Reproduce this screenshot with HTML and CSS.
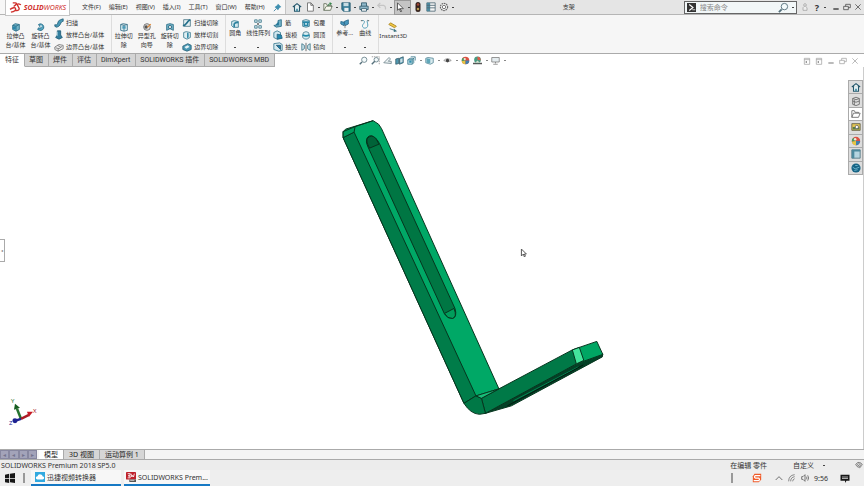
FILE: index.html
```html
<!DOCTYPE html>
<html lang="zh-CN">
<head>
<meta charset="utf-8">
<meta name="viewport" content="width=device-width, initial-scale=1">
<title>支架</title>
<link rel="stylesheet" href="styles.css">
</head>
<body>
<svg class="defs" aria-hidden="true">
  <symbol id="boss" viewBox="0 0 12 12"><path d="M2 4l3-2 5 1v6l-4 2-4-2z" fill="#73b5c9" stroke="#286b85"/><path d="M2 4l4 1v6M6 5l4-2" fill="none" stroke="#286b85"/><circle cx="4" cy="7" r="2" fill="#2c86aa"/></symbol>
  <symbol id="revolve" viewBox="0 0 12 12"><path d="M3 3a4 4 0 1 1 1 7l-2-1 1-2c3 1 4-1 3-2L5 6z" fill="#55a5c0" stroke="#236985"/><circle cx="6" cy="5" r="1" fill="#e7f5f8"/></symbol>
  <symbol id="sweep" viewBox="0 0 12 12"><path d="M1 8c5 2 2-5 7-6l3-1v3C7 4 9 10 3 11L1 10z" fill="#4a9ab8" stroke="#215f78"/></symbol>
  <symbol id="loft" viewBox="0 0 12 12"><path d="M4 1h4v5l2 3-4 2-4-2 2-3z" fill="#347f9f" stroke="#205a73"/><path d="M4 2v5" stroke="#a9d7e4"/></symbol>
  <symbol id="boundary" viewBox="0 0 12 12"><path d="M1 6l5-3 5 1v4L5 11 1 9z" fill="#eee" stroke="#777"/><path d="M2 7l4 1 4-3M5 8v3M4 4l4 2" fill="none" stroke="#777"/></symbol>
  <symbol id="cut" viewBox="0 0 12 12"><path d="M2 3l3-1 5 1v7l-4 1-4-1z" fill="#d9edf2" stroke="#397087"/><path d="M2 3l4 1 4-1M6 4v7" fill="none" stroke="#397087"/><path d="M4 5h4v3H4z" fill="#4a9ab8"/></symbol>
  <symbol id="hole" viewBox="0 0 12 12"><circle cx="6" cy="6" r="4" fill="#ddd" stroke="#666"/><circle cx="5" cy="6" r="2" fill="#555"/><path d="M6 6l4-4 1 1-4 4z" fill="#e4872f"/></symbol>
  <symbol id="revcut" viewBox="0 0 12 12"><path d="M2 3l4-1 4 1v7l-4-2-4 2z" fill="#77b5c9" stroke="#286b85"/><circle cx="6" cy="6" r="2" fill="#ddd" stroke="#286b85"/></symbol>
  <symbol id="sweepcut" viewBox="0 0 12 12"><path d="M2 2h8v8H2z" fill="#e5f0f3" stroke="#4c7888"/><path d="M1 9c5 0 4-5 9-7" fill="none" stroke="#246f8b" stroke-width="2"/></symbol>
  <symbol id="loftcut" viewBox="0 0 12 12"><path d="M2 3l3-1 5 1v6l-4 2-4-2z" fill="#dfeef2" stroke="#39788e"/><path d="M6 3l2 1v5l-2 1z" fill="#368da9"/></symbol>
  <symbol id="boundcut" viewBox="0 0 12 12"><path d="M1 5l6-3 4 2v5l-5 2-5-2z" fill="#4998b4" stroke="#27627a"/><path d="M3 6l4-2 2 2-4 2z" fill="#e6f3f7"/></symbol>
  <symbol id="fillet" viewBox="0 0 12 12"><path d="M2 3l3-1 5 1v7H4l-2-2z" fill="#d5eaf0" stroke="#397b91"/><path d="M5 10V6q1-2 5-2" fill="none" stroke="#2f829e" stroke-width="2"/></symbol>
  <symbol id="pattern" viewBox="0 0 12 12"><path d="M2 1h3v3H2zM7 1h3v3H7zM2 8h3v3H2zM7 8h3v3H7z" fill="#d3e9ef" stroke="#467c8e"/><path d="M5 5l2 2M7 5L5 7" stroke="#555"/></symbol>
  <symbol id="rib" viewBox="0 0 12 12"><path d="M1 9l5-1V3l4-1v8l-6 1z" fill="#74b3c7" stroke="#286b85"/><path d="M3 8l4-4v5z" fill="#247798"/></symbol>
  <symbol id="draft" viewBox="0 0 12 12"><path d="M1 3l4-2 4 2v7l-4 1-4-2z" fill="#d3e8ef" stroke="#397b91"/><path d="M5 5l5 1 1 4-6 1z" fill="#258ab0" stroke="#246481"/></symbol>
  <symbol id="shell" viewBox="0 0 12 12"><path d="M1 2l7-1 3 2v7l-4 1-6-2z" fill="#d5e9ef" stroke="#397b91"/><path d="M4 4h5v5z" fill="#237fa7" stroke="#245c78"/></symbol>
  <symbol id="wrap" viewBox="0 0 12 12"><path d="M2 3q4-2 8 0v7q-4 2-8 0z" fill="#d9edf2" stroke="#39768c"/><path d="M2 5h8M4 5v4h4V5" fill="none" stroke="#2685a6" stroke-width="2"/></symbol>
  <symbol id="dome" viewBox="0 0 12 12"><path d="M2 6a4 4 0 0 1 8 0v3q-4 4-8 0z" fill="#d9edf2" stroke="#4e7e90"/><path d="M2 6q4 2 8 0" fill="none" stroke="#238bab" stroke-width="2"/></symbol>
  <symbol id="mirror" viewBox="0 0 12 12"><path d="M1 2v8l3-2V4zM11 2v8L8 8V4z" fill="#d6eaf0" stroke="#397487"/><path d="M6 1v10" stroke="#555"/></symbol>
  <symbol id="refgeo" viewBox="0 0 12 12"><path d="M1 3l4 1v4L1 6zM5 3l5-2v5L6 8z" fill="#4a99bf" stroke="#286889"/><path d="M6 7v4" stroke="#777"/></symbol>
  <symbol id="curve" viewBox="0 0 12 12"><path d="M2 2c4-1 4 2 2 4s-1 5 2 5 4-3 3-6 0-4 1-3" fill="none" stroke="#3c91ad"/><path d="M1 2h2M9 2h2" stroke="#555"/></symbol>
  <symbol id="instant" viewBox="0 0 12 12"><path d="M1 3l2-2 7 4-2 2z" fill="#f1c744" stroke="#a7821d"/><path d="M2 8l6 2" stroke="#3c7380"/><path d="M7 8l4 3-4 1z" fill="#3c7380"/></symbol>
  <symbol id="home" viewBox="0 0 12 12"><path d="M1 6l5-4 5 4M3 5v6h6V5" fill="#e4f1f4" stroke="#24566a" stroke-width="1.3"/><path d="M5 11V8h2v3" fill="#408ba5"/></symbol>
  <symbol id="new" viewBox="0 0 12 12"><path d="M3 1h4l3 3v7H3zM7 1v3h3" fill="#fff" stroke="#666"/></symbol>
  <symbol id="open" viewBox="0 0 12 12"><path d="M1 10V2h3l1 2h5v2M1 10l3-5h7l-2 5z" fill="#f6f7ed" stroke="#65705b"/><path d="M6 5c0-2 1-3 3-3" fill="none" stroke="#36854a"/><path d="M8 0l3 2-3 2z" fill="#36854a"/></symbol>
  <symbol id="save" viewBox="0 0 12 12"><path d="M1 1h10v10H3l-2-2z" fill="#397e99" stroke="#24586d"/><path d="M3 1h6v4H3z" fill="#c7dce3"/><path d="M4 7h5v4H4z" fill="#e8eef1"/></symbol>
  <symbol id="print" viewBox="0 0 12 12"><path d="M3 5V1h6v4M1 5h10v4H1z" fill="#8fb8ca" stroke="#315a6c"/><path d="M3 8h6v3H3z" fill="#fff" stroke="#315a6c"/></symbol>
  <symbol id="undo" viewBox="0 0 12 12"><path d="M2 4h6q3 1 2 5M4 1L1 4l3 3" fill="none" stroke="#c5c5c5" stroke-width="1.5"/></symbol>
  <symbol id="cursor" viewBox="0 0 12 12"><path d="M3 1v9l2-2 2 4 1-1-2-3h4z" fill="#fff" stroke="#444"/></symbol>
  <symbol id="traffic" viewBox="0 0 12 12"><rect x="3" width="6" height="12" rx="3" fill="#35231e"/><circle cx="6" cy="3" r="1.5" fill="#9f4435"/><circle cx="6" cy="8.500" r="1.500" fill="#b99d54"/></symbol>
  <symbol id="props" viewBox="0 0 12 12"><path d="M1 1h10v10H1z" fill="#f5f5f5" stroke="#4e6873"/><path d="M1 1h4v10H1z" fill="#4d899e"/><path d="M1 4h10M1 7h10" stroke="#4e6873"/></symbol>
  <symbol id="paneprops" viewBox="0 0 12 12"><path d="M1 1h10v10H1z" fill="#b5d5e1" stroke="#4e7180"/><path d="M1 1h10v2H1zM1 1h3v10H1z" fill="#4d899e"/></symbol>
  <symbol id="gear" viewBox="0 0 12 12"><circle cx="6" cy="6" r="4.300" fill="#eee" stroke="#666" stroke-width="1.4" stroke-dasharray="2 .8"/><circle cx="6" cy="6" r="2" fill="#fff" stroke="#666"/></symbol>
  <symbol id="pin" viewBox="0 0 12 12"><path d="M6 2l4 4-2 1-2 3-4-4 3-2z" fill="#4090b0"/><path d="M4 8l-3 3" stroke="#397c9b"/></symbol>
  <symbol id="command" viewBox="0 0 12 12"><path d="M0 0h12v12H0z" fill="#333"/><path d="M3 2l5 4-5 4" fill="none" stroke="#fff" stroke-width="1.500"/><path d="M7 9h4" stroke="#fff"/></symbol>
  <symbol id="mag" viewBox="0 0 12 12"><circle cx="7" cy="5" r="3.500" fill="#f4fbfc" stroke="#55707b"/><path d="M4 8l-3 3" stroke="#55707b" stroke-width="2"/></symbol>
  <symbol id="user" viewBox="0 0 12 12"><circle cx="6" cy="3" r="2" fill="#eee" stroke="#999"/><path d="M3 11V7l2-2h2l2 2v4z" fill="#eee" stroke="#999"/></symbol>
  <symbol id="min" viewBox="0 0 12 12"><path d="M2 9h8" stroke="currentColor" stroke-width="2"/></symbol>
  <symbol id="restore" viewBox="0 0 12 12"><path d="M1 5h7v5H1zM4 5V2h7v5H8" fill="none" stroke="currentColor"/></symbol>
  <symbol id="close" viewBox="0 0 12 12"><path d="M2 2l8 8M10 2l-8 8" stroke="currentColor"/></symbol>
  <symbol id="dock" viewBox="0 0 12 12"><path d="M2 2h8v9H2zM2 4h8" fill="none" stroke="currentColor"/><path d="M4 6h2v3H4z" fill="currentColor"/></symbol>
  <symbol id="magarea" viewBox="0 0 12 12"><path d="M1 1h10v10" fill="none" stroke="#888" stroke-dasharray="2 1"/><circle cx="7" cy="5" r="3" fill="#f4fafb" stroke="#55707b"/><path d="M5 7l-4 4" stroke="#55707b" stroke-width="2"/></symbol>
  <symbol id="prev" viewBox="0 0 12 12"><path d="M1 9l7-7 2 2-3 3h4v3z" fill="#edf4f5" stroke="#607780"/></symbol>
  <symbol id="section" viewBox="0 0 12 12"><path d="M1 4l4-1v7l-4 1zM6 3l5-2v8l-5 2z" fill="#5099b2" stroke="#345967"/><path d="M7 4l3-1v5L7 9z" fill="#cfe0e5"/></symbol>
  <symbol id="orient" viewBox="0 0 12 12"><path d="M1 5l3-2h5v6l-2 2H1z" fill="#b8dce4" stroke="#39788b"/><path d="M1 5h6v6M7 5l3-3M5 1h6v5" fill="none" stroke="#39788b"/><path d="M3 6h3v3H3z" fill="#328fae"/></symbol>
  <symbol id="display" viewBox="0 0 12 12"><path d="M1 3l3-1 7 1v6l-4 2-6-2z" fill="#d8eaee" stroke="#4b7e8f"/><path d="M2 3l5 1v6L2 9z" fill="#60a7b9"/></symbol>
  <symbol id="eye" viewBox="0 0 12 12"><path d="M1 6q5-5 10 0-5 4-10 0z" fill="#eee" stroke="#888"/><circle cx="6" cy="6" r="2.200" fill="#444"/></symbol>
  <symbol id="colors" viewBox="0 0 12 12"><circle cx="6" cy="6" r="5" fill="#db5142"/><path d="M6 6L3 2a5 5 0 0 0-2 5z" fill="#479b5e"/><path d="M6 6l-5 1a5 5 0 0 0 5 4z" fill="#e5c744"/><path d="M6 6v5a5 5 0 0 0 5-5z" fill="#407fb0"/><circle cx="5" cy="4" r="1.500" fill="#f0e9df"/></symbol>
  <symbol id="scene" viewBox="0 0 12 12"><path d="M0 9h12v2H0z" fill="#555"/><circle cx="6" cy="5" r="4.500" fill="#4a9c83"/><path d="M6 5V1a4 4 0 0 1 4 5z" fill="#df5b49"/><path d="M3 9l3-3 3 3z" fill="#e1dfd3"/></symbol>
  <symbol id="monitor" viewBox="0 0 12 12"><path d="M1 2h10v6H1z" fill="#e4ecef" stroke="#777"/><path d="M6 8v2M3 11h6" stroke="#777"/></symbol>
  <symbol id="library" viewBox="0 0 12 12"><path d="M2 3q4-3 8 0v7q-4 3-8 0z" fill="#ddd" stroke="#666"/><path d="M2 3q4 3 8 0M2 6q4 3 8 0M4 5v6" fill="none" stroke="#666"/></symbol>
  <symbol id="folder" viewBox="0 0 12 12"><path d="M1 10V2h3l1 2h4v1M1 10l2-5h8l-2 5z" fill="#fff" stroke="#666"/></symbol>
  <symbol id="palette" viewBox="0 0 12 12"><path d="M1 2h10v8H1z" fill="#e4c653" stroke="#625e43"/><path d="M2 6h8v3H2z" fill="#587d48"/><circle cx="7" cy="6" r="2" fill="#fff" stroke="#666"/></symbol>
  <symbol id="globe" viewBox="0 0 12 12"><circle cx="6" cy="6" r="5.500" fill="#176485"/><path d="M2 5l3 2 5-2M4 9l4-1M5 3h3" fill="none" stroke="#75bdd5"/></symbol>
  <symbol id="windows" viewBox="0 0 12 12"><path d="M0 2l5-1v5H0zM6 1l6-1v6H6zM0 7h5v5l-5-1zM6 7h6v5l-6-1z" fill="#171717"/></symbol>
  <symbol id="cloud" viewBox="0 0 12 12"><path d="M0 0h12v12H0z" fill="#32a9df"/><path d="M3 9a2 2 0 0 1 0-4q1-3 4-2 2 0 2 2a2 2 0 0 1 0 4z" fill="#fff"/></symbol>
  <symbol id="swapp" viewBox="0 0 12 12"><rect width="12" height="9" rx="1" fill="#be202b"/><path d="M2 2h3v2H3v1h2v2H2M6 2l1 4 1-2 1 2 1-4" fill="none" stroke="#fff"/><path d="M4 9h8v3H4z" fill="#555"/><path d="M5 10h5" stroke="#ddd"/></symbol>
  <symbol id="sogou" viewBox="0 0 12 12"><path d="M3 1h8v7l-3 3H1V4z" fill="#f05a28"/><path d="M10 3H4q-2 2 0 3h4q2 2 0 3H2" fill="none" stroke="#fff" stroke-width="1.500"/></symbol>
  <symbol id="chevron" viewBox="0 0 12 12"><path d="M1 9l5-5 5 5" fill="none" stroke="#333"/></symbol>
  <symbol id="wifi" viewBox="0 0 12 12"><path d="M1 11Q1 2 10 1M4 11q0-6 6-7M7 11q0-3 3-4" fill="none" stroke="#555"/></symbol>
  <symbol id="sound" viewBox="0 0 12 12"><path d="M1 4h2l3-3v10L3 8H1z" fill="none" stroke="#444"/><path d="M8 4q2 2 0 4M10 2q3 4 0 8" fill="none" stroke="#444"/></symbol>
  <symbol id="notice" viewBox="0 0 12 12"><path d="M0 1h12v8H8l-2 3V9H0z" fill="#181818"/><path d="M2 4h8M2 6h8" stroke="#ddd"/></symbol>
  <symbol id="tag" viewBox="0 0 12 12"><path d="M1 5q3-5 8-2l2 3-4 4q-5-1-6-5zM3 5l5 4M5 3l4 4" fill="#ddd" stroke="#555"/></symbol>
</svg>

<div class="app">
  <header class="titlebar">
    <div class="brand">
      <svg class="ds" viewBox="0 0 14 12" aria-hidden="true"><path d="M4 1h3q3 0-2 4M2 11q6-1 5-4Q6 5 1 8M13 3q-4-2-4 0l2 4q0 3-4 2" fill="none" stroke="#d0312d" stroke-width="1.500"/></svg>
      <span><b>SOLID</b>WORKS</span>
    </div>
    <nav class="menus">
      <button>文件(F)</button><button>编辑(E)</button><button>视图(V)</button><button>插入(I)</button><button>工具(T)</button><button>窗口(W)</button><button>帮助(H)</button>
      <button class="pin" aria-label="固定"><svg><use href="#pin"/></svg></button>
    </nav>
    <div class="titlerest">
      <div class="quick">
        <button aria-label="主页"><svg><use href="#home"/></svg></button>
        <button class="drop" aria-label="新建"><svg><use href="#new"/></svg></button>
        <button class="drop" aria-label="打开"><svg><use href="#open"/></svg></button>
        <button class="drop" aria-label="保存"><svg><use href="#save"/></svg></button>
        <button class="drop" aria-label="打印"><svg><use href="#print"/></svg></button>
        <button class="drop" aria-label="撤销"><svg><use href="#undo"/></svg></button>
        <button class="drop pressed" aria-label="选择"><svg><use href="#cursor"/></svg></button>
        <button aria-label="重建模型"><svg><use href="#traffic"/></svg></button>
        <button aria-label="文件属性"><svg><use href="#props"/></svg></button>
        <button class="drop" aria-label="选项"><svg><use href="#gear"/></svg></button>
      </div>
      <div class="doc">支架</div>
      <form class="search">
        <svg><use href="#command"/></svg>
        <input type="text" placeholder="搜索命令" aria-label="搜索命令">
        <button class="drop" type="button" aria-label="搜索"><svg><use href="#mag"/></svg></button>
      </form>
      <div class="winbtns">
        <button aria-label="登录"><svg><use href="#user"/></svg></button>
        <button class="drop help">?</button>
        <button aria-label="最小化"><svg><use href="#min"/></svg></button>
        <button aria-label="还原"><svg><use href="#restore"/></svg></button>
        <button aria-label="关闭"><svg><use href="#close"/></svg></button>
      </div>
    </div>
  </header>

  <section class="ribbon">
    <div class="group">
      <button class="big low"><svg><use href="#boss"/></svg><span>拉伸凸<br>台/基体</span></button>
      <button class="big low"><svg><use href="#revolve"/></svg><span>旋转凸<br>台/基体</span></button>
      <div class="stack">
        <button><svg><use href="#sweep"/></svg>扫描</button>
        <button><svg><use href="#loft"/></svg>放样凸台/基体</button>
        <button><svg><use href="#boundary"/></svg>边界凸台/基体</button>
      </div>
    </div>
    <div class="group">
      <button class="big low"><svg><use href="#cut"/></svg><span>拉伸切<br>除</span></button>
      <button class="big low"><svg><use href="#hole"/></svg><span>异型孔<br>向导</span></button>
      <button class="big low"><svg><use href="#revcut"/></svg><span>旋转切<br>除</span></button>
      <div class="stack">
        <button><svg><use href="#sweepcut"/></svg>扫描切除</button>
        <button><svg><use href="#loftcut"/></svg>放样切割</button>
        <button><svg><use href="#boundcut"/></svg>边界切除</button>
      </div>
    </div>
    <div class="group">
      <button class="big slim more"><svg><use href="#fillet"/></svg><span>圆角</span></button>
      <button class="big wide more"><svg><use href="#pattern"/></svg><span>线性阵列</span></button>
      <div class="stack">
        <button><svg><use href="#rib"/></svg>筋</button>
        <button><svg><use href="#draft"/></svg>拔模</button>
        <button><svg><use href="#shell"/></svg>抽壳</button>
      </div>
      <div class="stack">
        <button><svg><use href="#wrap"/></svg>包覆</button>
        <button><svg><use href="#dome"/></svg>圆顶</button>
        <button><svg><use href="#mirror"/></svg>镜向</button>
      </div>
    </div>
    <div class="group">
      <button class="big more"><svg><use href="#refgeo"/></svg><span>参考...</span></button>
      <button class="big slim more"><svg><use href="#curve"/></svg><span>曲线</span></button>
    </div>
    <div class="group last">
      <button class="big wide low"><svg><use href="#instant"/></svg><span>Instant3D</span></button>
    </div>
  </section>

  <div class="tabrow">
    <nav class="tabs">
      <button class="on">特征</button><button>草图</button><button>焊件</button><button>评估</button><button>DimXpert</button><button>SOLIDWORKS 插件</button><button>SOLIDWORKS MBD</button>
    </nav>
    <div class="hud">
      <button aria-label="整屏显示全图"><svg><use href="#mag"/></svg></button>
      <button aria-label="局部放大"><svg><use href="#magarea"/></svg></button>
      <button aria-label="上一视图"><svg><use href="#prev"/></svg></button>
      <button aria-label="剖面视图"><svg><use href="#section"/></svg></button>
      <button class="drop" aria-label="视图定向"><svg><use href="#orient"/></svg></button>
      <button class="drop" aria-label="显示样式"><svg><use href="#display"/></svg></button>
      <button class="drop" aria-label="隐藏项目"><svg><use href="#eye"/></svg></button>
      <button aria-label="编辑外观"><svg><use href="#colors"/></svg></button>
      <button class="drop" aria-label="应用布景"><svg><use href="#scene"/></svg></button>
      <button class="drop" aria-label="视图设定"><svg><use href="#monitor"/></svg></button>
    </div>
    <div class="docbtns">
      <button aria-label="左侧面板"><svg><use href="#dock"/></svg></button>
      <button aria-label="右侧面板"><svg><use href="#dock"/></svg></button>
      <button aria-label="最小化文档"><svg><use href="#min"/></svg></button>
      <button aria-label="还原文档"><svg><use href="#restore"/></svg></button>
      <button aria-label="关闭文档"><svg><use href="#close"/></svg></button>
    </div>
  </div>

  <main class="viewport">
    <svg class="model" viewBox="0 67 864 382" role="img" aria-label="支架模型">
      <g stroke="#06351e" stroke-width="1" stroke-linejoin="round">
        <path d="M343.500 131.500L346 129 373.500 120.500 379 124 382 128.500 499.500 389 477 396 464.500 403.500 343.500 137.500z" fill="#00a866"/>
        <path d="M343.500 137.500L354.500 132 476.500 396 464.500 403.500z" fill="#007c49"/>
        <path d="M343.500 131.500L355.500 126.500 354.500 132 343.500 137.500z" fill="#009b5d"/>
        <path d="M355.500 126.500L373.500 120.500" fill="none"/>
        <path d="M367 143C366 137 370 134 374 136.500Q378 139 380 143.500L455.500 308.500Q458 317 453 318.500Q448 319 445 314L368.500 147z" fill="#007643"/>
        <path d="M370 148L379.500 144 376 138Q372 134 368 138 366 141 370 148z" fill="#006338"/>
        <path d="M445 313.500L454.500 308.500Q458 317 453 318.500 448 319 445 313.500z" fill="#009d5b"/>
        <path d="M486 413.500L573 366 603.500 354 603 357 512 406z" fill="#034126"/>
        <path d="M482 398.500L499.500 389 573 350 580 347.500 577 364 486 413.500z" fill="#007947"/>
        <path d="M580 347.500L597.500 341.500 603.500 354.500 577 364z" fill="#00a663"/>
        <path d="M573 350L580 347.500 584.500 360.500 577 364z" fill="#43e49c"/>
        <path d="M464.500 403.500Q471 414 480 414.500L486 413.500 482 398.500 476.500 396z" fill="#007846"/>
        <path d="M476.500 396L482 398.500 499.500 389z" fill="#18bc79"/>
        <path d="M514 401L579 367" fill="none" stroke="#008650"/>
        <path d="M508 406L584 365" fill="none" stroke="#021b10"/>
      </g>
      <path d="M522 249v7l2-2 1 3 1-1-1-2h2z" fill="#fff" stroke="#555" stroke-width="1"/>
      <g stroke-width="2.500">
        <path d="M21 419L17 409" stroke="#267330"/><path d="M14 410l1-6 5 4z" fill="#155d20"/>
        <path d="M21 419l8-4" stroke="#a91b24"/><path d="M27 412l6 0-4 5z" fill="#c51925"/>
        <path d="M21 419l-6 2" stroke="#1d2290"/><circle cx="15" cy="421" r="2.500" fill="#1d2290"/>
      </g>
      <g class="axes"><text x="11" y="403" fill="#267330">Y</text><text x="33" y="413" fill="#a91b24">X</text><text x="9" y="425" fill="#1d2290">Z</text></g>
    </svg>
    <button class="handle" aria-label="展开设计树">◂</button>
    <aside class="taskpane">
      <button aria-label="资源"><svg><use href="#home"/></svg></button>
      <button aria-label="设计库"><svg><use href="#library"/></svg></button>
      <button class="on" aria-label="文件探索器"><svg><use href="#folder"/></svg></button>
      <button aria-label="视图调色板"><svg><use href="#palette"/></svg></button>
      <button aria-label="外观"><svg><use href="#colors"/></svg></button>
      <button aria-label="自定义属性"><svg><use href="#paneprops"/></svg></button>
      <button aria-label="论坛"><svg><use href="#globe"/></svg></button>
    </aside>
  </main>

  <nav class="modeltabs">
    <div class="steps"><button aria-label="最前">◂</button><button aria-label="向前">◂</button><button aria-label="向后">▸</button><button aria-label="最后">▸</button></div>
    <button class="tab on">模型</button><button class="tab">3D 视图</button><button class="tab">运动算例 1</button>
  </nav>
  <footer class="status">
    <span class="product">SOLIDWORKS Premium 2018 SP5.0</span>
    <span>在编辑 零件</span>
    <button class="units drop">自定义</button>
    <svg><use href="#tag"/></svg>
  </footer>
  <div class="taskbar">
    <button class="start" aria-label="开始"><svg><use href="#windows"/></svg></button>
    <i class="grip"></i>
    <button class="task"><svg><use href="#cloud"/></svg>迅捷视频转换器</button>
    <button class="task"><svg><use href="#swapp"/></svg>SOLIDWORKS Prem...</button>
    <div class="tray">
      <i class="grip"></i>
      <svg class="ime"><use href="#sogou"/></svg>
      <svg><use href="#chevron"/></svg><svg><use href="#wifi"/></svg><svg><use href="#sound"/></svg>
      <time>9:56</time>
      <svg class="notice"><use href="#notice"/></svg>
    </div>
  </div>
</div>
</body>
</html>
```
FILE: styles.css
```css
* { box-sizing: border-box; }
body {
  margin: 0;
  font: 6px/9px "Noto Sans", "Noto Sans CJK SC", sans-serif;
  color: #333;
  background: #fff;
}
button, input {
  margin: 0;
  padding: 0;
  border: 0;
  background: none;
  color: inherit;
  font: inherit;
  white-space: nowrap;
}
svg { display: block; flex: none; width: 10px; height: 10px; }
.defs { position: absolute; width: 0; height: 0; }
.app { display: flex; flex-direction: column; height: 100vh; overflow: hidden; }

.drop { display: flex; align-items: center; gap: 3px; }
.drop::after, .more::after {
  content: "";
  flex: none;
  width: 2px;
  height: 1px;
  background: #444;
}

/* Title bar */
.titlebar { display: flex; flex: none; height: 15px; background: #f7f7f7; border-bottom: 1px solid #b5b5b5; }
.brand {
  display: flex;
  align-items: center;
  justify-content: center;
  gap: 2px;
  z-index: 1;
  width: 65px;
  height: 16px;
  margin-left: 5px;
  background: #fff;
  border: 1px solid #c5c5c5;
  border-top: 0;
  color: #d0312d;
  font-size: 7px;
  font-style: italic;
}
.ds { width: 13px; height: 11px; }
.menus { display: flex; align-items: center; gap: 8px; padding: 0 2px 0 12px; }
.titlerest {
  display: flex;
  flex: 1;
  align-items: center;
  background: #e5e5e5;
  border-left: 1px solid #c5c5c5;
}
.quick { display: flex; align-items: center; gap: 3px; margin-left: 6px; }
.quick .pressed { height: 13px; background: #c4c4c4; outline: 1px solid #999; }
.doc { flex: 1; text-align: center; }
.search {
  display: flex;
  align-items: center;
  gap: 4px;
  width: 113px;
  height: 13px;
  padding: 0 2px;
  background: #f2f7f8;
  border: 1px solid #666;
}
.search svg { width: 9px; height: 9px; }
.search input { flex: 1; min-width: 0; height: 9px; outline: 0; font-size: 7px; }
.search input::placeholder { color: #888; opacity: 1; }
.search .drop svg { width: 11px; height: 11px; }
.winbtns { display: flex; align-items: center; gap: 3px; padding: 0 2px 0 4px; }
.winbtns svg { width: 8px; height: 8px; }
.help { gap: 5px; padding: 0 3px; font-size: 9px; font-weight: 700; }

/* Ribbon */
.ribbon { display: flex; flex: none; height: 38px; padding-left: 3px; background: #f6f6f6; }
.group { display: flex; padding-right: 4px; border-right: 1px solid #ddd; }
.group.last { border: 0; }
.big {
  display: flex;
  flex-direction: column;
  align-items: center;
  width: 23px;
  padding-top: 4px;
  line-height: 9px;
}
.group:first-child .big { width: 25px; }
.big.low { padding-top: 7px; }
.big.slim { width: 18px; }
.big.wide { width: 28px; }
.more::after { margin-top: 9px; }
.stack { display: flex; flex-direction: column; padding: 2px 3px 0 1px; }
.stack button { display: flex; align-items: center; gap: 2px; height: 12px; }

/* Command tabs and view toolbar */
.tabrow {
  display: grid;
  grid-template-columns: 1fr auto 1fr;
  flex: none;
  align-items: center;
  height: 14px;
  border-top: 1px solid #aaa;
}
.tabs { display: flex; align-self: stretch; }
.tabs button {
  padding: 0 5px 0 4px;
  background: #d4d4d4;
  border-right: 1px solid #aaa;
  border-bottom: 1px solid #aaa;
  font-family: Roboto, "Noto Sans CJK SC", sans-serif;
  font-size: 7px;
}
.tabs .on { padding-left: 5px; background: #fff; border-bottom-color: #fff; }
.hud { display: flex; align-items: center; gap: 3px; }
.hud svg { width: 9px; height: 9px; }
.hud .drop { gap: 4px; }
.hud .drop::after { background: #888; }
.docbtns { display: flex; justify-content: end; gap: 4px; padding-right: 5px; color: #999; }
.docbtns svg { width: 8px; height: 8px; }

/* Graphics area */
.viewport { position: relative; flex: 1; min-height: 0; border-right: 1px solid #ccc; }
.model { width: 100%; height: 100%; }
.axes { font-size: 6px; }
.handle {
  position: absolute;
  top: 45%;
  left: 0;
  width: 5px;
  height: 23px;
  border: 1px solid #aaa;
  border-left: 0;
  color: #777;
  font-size: 4px;
}
.taskpane {
  position: absolute;
  top: 13px;
  right: 0;
  display: flex;
  flex-direction: column;
  height: 95px;
  border: 1px solid #aaa;
  border-bottom: 0;
}
.taskpane button {
  display: grid;
  flex: 1;
  place-items: center;
  width: 13px;
  background: #ddd;
  border-bottom: 1px solid #aaa;
}
.taskpane .on { background: #fff; }

/* Bottom tabs and status */
.modeltabs { display: flex; flex: none; height: 11px; background: #f4f4f4; border: 1px solid #aaa; border-width: 1px 0; }
.steps { display: flex; width: 37px; margin-right: 2px; background: #a3a3b9; color: #74748d; }
.steps button { flex: 1; border: 1px solid #8787a0; line-height: 6px; }
.tab {
  padding: 0 5px;
  border-right: 1px solid #aaa;
  background: #d6d6d6;
  font-size: 7px;
  color: #222;
}
.tab.on { background: #fff; }
.status {
  display: flex;
  flex: none;
  align-items: center;
  height: 10px;
  padding: 0 1px;
  background: #ececec;
  font-size: 7px;
}
.product { flex: 1; }
.units { gap: 9px; margin: 0 30px 0 26px; }
.status svg { width: 8px; height: 8px; }

/* Desktop taskbar */
.taskbar { display: flex; flex: none; align-items: center; height: 16px; background: #eee; font-size: 7px; }
.start { margin: 0 8px 0 5px; }
.grip { width: 2px; height: 10px; background: #999; }
.task {
  display: flex;
  align-items: center;
  gap: 2px;
  width: 90px;
  height: 16px;
  margin-left: 6px;
  padding: 0 4px;
  background: #f7f7f7;
  border-bottom: 2px solid #1679c4;
}
.task + .task { width: 86px; margin-left: 3px; padding: 0 2px; }
.tray { display: flex; align-items: center; gap: 5px; margin-left: auto; padding-right: 14px; }
.tray svg { width: 8px; height: 8px; }
.tray .ime { width: 10px; height: 10px; margin: 0 8px 0 14px; }
.tray .notice { width: 10px; height: 9px; margin-left: 7px; }
```
